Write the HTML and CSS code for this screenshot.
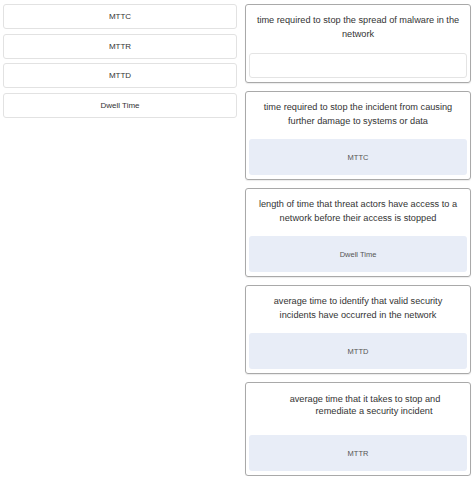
FILE: index.html
```html
<!DOCTYPE html>
<html lang="en">
<head>
<meta charset="utf-8">
<title>Match the terms</title>
<link rel="stylesheet" href="styles.css">
</head>
<body>
<div class="board">
  <div class="choices">
    <div class="choice">MTTC</div>
    <div class="choice">MTTR</div>
    <div class="choice">MTTD</div>
    <div class="choice">Dwell Time</div>
  </div>
  <div class="targets">
    <div class="card card-first">
      <p class="prompt">time required to stop the spread of malware in the network</p>
      <div class="drop drop-empty"></div>
    </div>
    <div class="card">
      <p class="prompt">time required to stop the incident from causing further damage to systems or data</p>
      <div class="drop">MTTC</div>
    </div>
    <div class="card">
      <p class="prompt">length of time that threat actors have access to a network before their access is stopped</p>
      <div class="drop">Dwell Time</div>
    </div>
    <div class="card">
      <p class="prompt">average time to identify that valid security incidents have occurred in the network</p>
      <div class="drop">MTTD</div>
    </div>
    <div class="card card-last">
      <p class="prompt prompt-offset">average time that it takes to stop and<br><span class="indent">remediate a security incident</span></p>
      <div class="drop">MTTR</div>
    </div>
  </div>
</div>
</body>
</html>
```

FILE: styles.css
```css
* { box-sizing: border-box; }

html, body {
  margin: 0;
  padding: 0;
  background: #ffffff;
}

body {
  font-family: "Liberation Sans", Arial, sans-serif;
  color: #333333;
}

.board {
  display: flex;
  align-items: flex-start;
  padding: 4px 3px 0 3px;
  gap: 8px;
}

.choices {
  width: 234px;
  display: flex;
  flex-direction: column;
  gap: 4.5px;
}

.choice {
  height: 25px;
  border: 1px solid #e2e2e2;
  border-radius: 3px;
  display: flex;
  align-items: center;
  justify-content: center;
  font-size: 8px;
  color: #333333;
}

.targets {
  width: 226px;
  display: flex;
  flex-direction: column;
  gap: 8px;
}

.card {
  border: 1px solid #a9a9a9;
  border-radius: 3px;
  padding: 8px 3px 4px 3px;
  box-shadow: 0 1px 1px rgba(0,0,0,0.08);
}

.card-last {
  padding-top: 10px;
}

.prompt {
  margin: 0 0 11px 0;
  padding: 0 7px;
  font-size: 9.2px;
  line-height: 14px;
  text-align: center;
  color: #333333;
}

.card-first .prompt {
  margin-bottom: 12px;
}

.prompt-offset {
  padding: 0 0 0 14px;
  line-height: 12px;
  margin-bottom: 18px;
}

.indent {
  padding-left: 18px;
}

.drop {
  height: 36px;
  border-radius: 3px;
  background: #e8edf7;
  display: flex;
  align-items: center;
  justify-content: center;
  font-size: 7.5px;
  color: #555555;
}

.drop-empty {
  height: 25px;
  background: #ffffff;
  border: 1px solid #e4e4e4;
}
```
